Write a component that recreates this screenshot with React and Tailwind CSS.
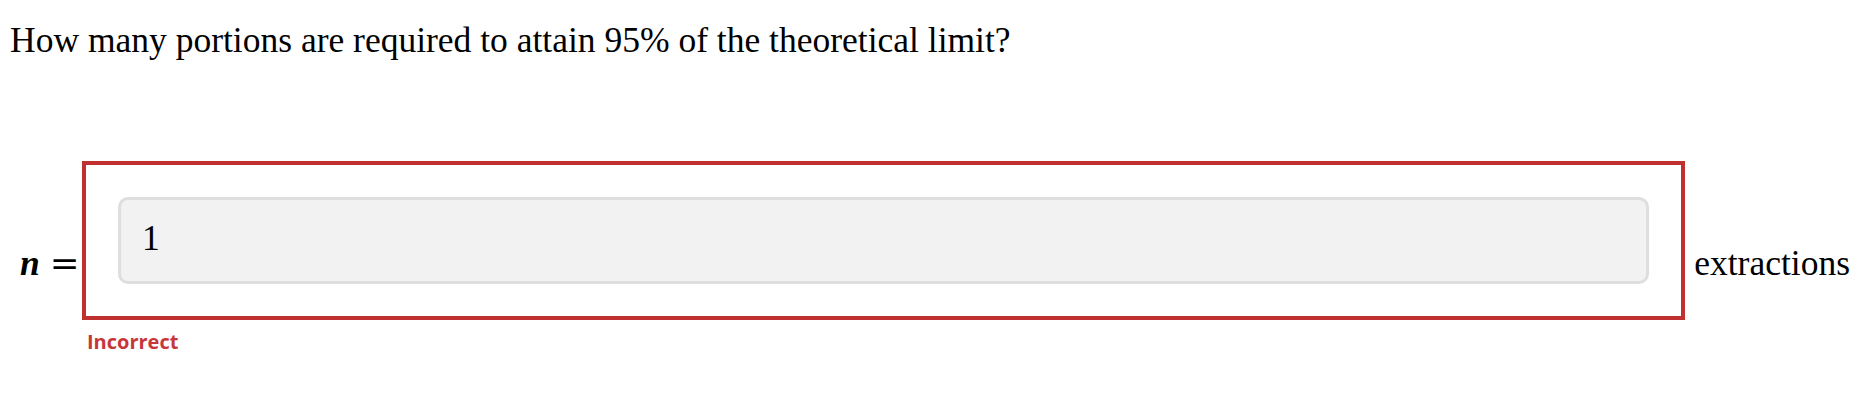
import React from "react";

const serif = { fontFamily: '"Liberation Serif", "Times New Roman", serif' };

export default function App() {
  return (
    <div className="w-[1864px] h-[400px] bg-white text-black pl-[10px] pr-[14px]" style={serif}>
      {/* question */}
      <p className="pt-[20px] text-[35.5px] leading-[40px]">
        How many portions are required to attain 95% of the theoretical limit?
      </p>

      {/* answer row */}
      <div className="mt-[101px] flex items-start">
        <div className="w-[72px] mt-[82px] flex text-[35.5px] leading-[40px] whitespace-nowrap">
          <span className="ml-[10px] italic font-bold">n</span>
          <span className="ml-[10px]" style={{ fontFamily: '"DejaVu Serif", serif' }}>=</span>
        </div>

        <div className="flex-1">
          <div className="border-4 border-[#c0302f] p-[32px]">
            <input
              readOnly
              value="1"
              className="block w-full h-[87px] rounded-[10px] border-[3px] border-[#dedede] bg-[#f2f2f2] pl-[21px] pb-[5px] text-[35.5px] text-black outline-none"
              style={serif}
            />
          </div>
          <div
            className="mt-[8px] text-[20px] leading-[28px] font-bold text-[#c8363a] pl-[5px]"
            style={{ fontFamily: '"Open Sans", sans-serif' }}
          >
            Incorrect
          </div>
        </div>

        <div className="mt-[82px] ml-[9px] text-[35.5px] leading-[40px]">extractions</div>
      </div>
    </div>
  );
}
